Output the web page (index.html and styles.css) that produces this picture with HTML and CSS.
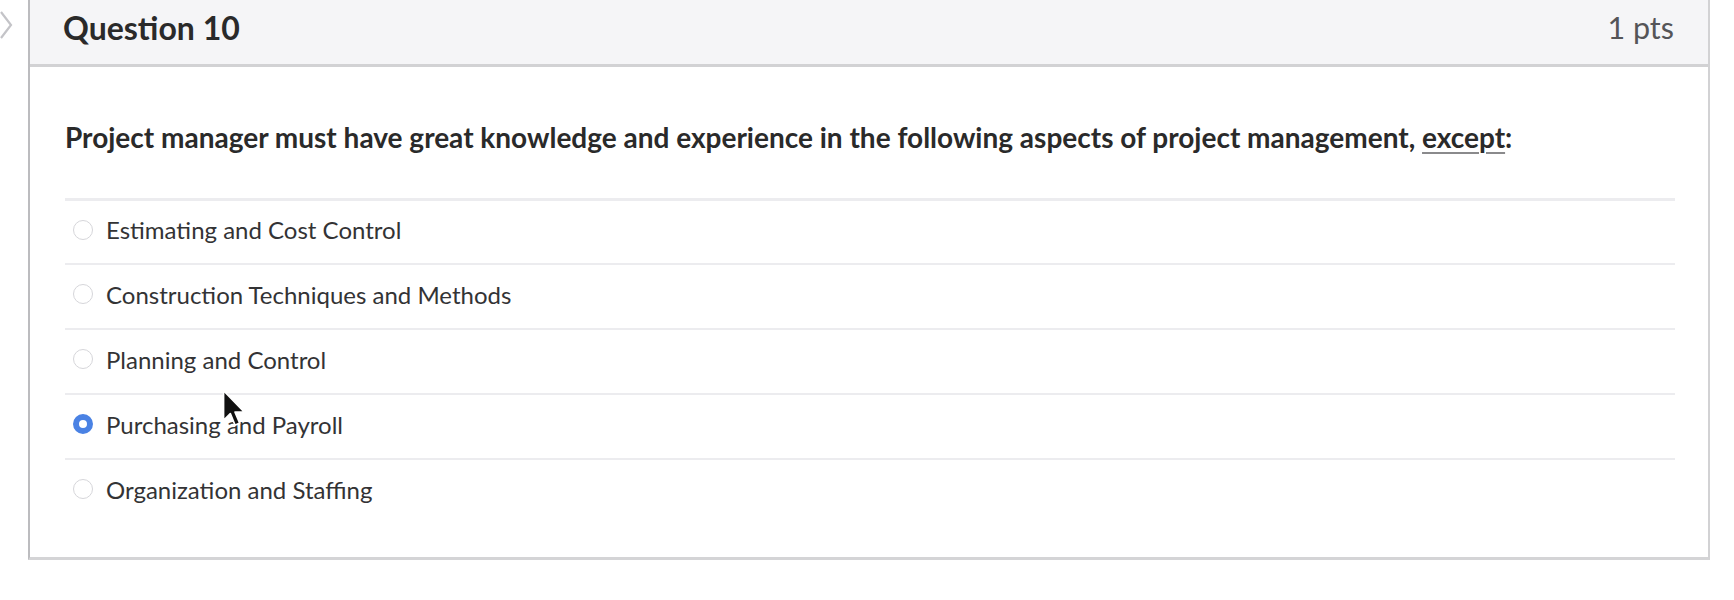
FILE: index.html
```html
<!DOCTYPE html>
<html>
<head>
<meta charset="utf-8">
<link rel="stylesheet" href="styles.css">
</head>
<body>
<div class="page">
  <div class="gutter">
    <svg class="chevron" width="14" height="30" viewBox="0 0 14 30"><polyline points="1,2 11,15 1,28" fill="none" stroke="#c4c4c8" stroke-width="2.2"/></svg>
  </div>
  <div class="card">
    <div class="card-header">
      <span class="q-title">Question 10</span>
      <span class="q-pts">1 pts</span>
    </div>
    <div class="card-body">
      <p class="q-text">Project manager must have great knowledge and experience in the following aspects of project management, <u class="emph">except</u>:</p>
      <div class="answers">
        <label class="answer"><span class="radio"></span><span class="label">Estimating and Cost Control</span></label>
        <label class="answer"><span class="radio"></span><span class="label">Construction Techniques and Methods</span></label>
        <label class="answer"><span class="radio"></span><span class="label">Planning and Control</span></label>
        <label class="answer"><span class="radio checked"></span><span class="label">Purchasing and Payroll</span>
          <svg class="cursor" width="25" height="40" viewBox="0 0 24 38"><path d="M1.5,1.5 L1.5,30 L8,23.5 L12.5,34.5 L17,32.5 L12.5,22 L21.5,22 Z" fill="#111" stroke="#fff" stroke-width="1.6" stroke-linejoin="round"/></svg>
        </label>
        <label class="answer"><span class="radio"></span><span class="label">Organization and Staffing</span></label>
      </div>
    </div>
  </div>
</div>
</body>
</html>
```

FILE: styles.css
```css
html, body {
  margin: 0;
  padding: 0;
  background: #ffffff;
}
body {
  font-family: Lato, "Noto Sans", sans-serif;
  color: #2d2d2d;
}
.page {
  display: flex;
  align-items: flex-start;
  width: 1734px;
}
.gutter {
  width: 28px;
  flex: none;
  padding-top: 10px;
}
.chevron {
  display: block;
}
.card {
  width: 1678px;
  border-left: 2px solid #bcbcbf;
  border-right: 2px solid #d2d2d4;
  border-bottom: 3px solid #d4d4d6;
}
.card-header {
  box-sizing: border-box;
  height: 67px;
  background: #f5f5f7;
  border-bottom: 3px solid #d2d2d4;
  display: flex;
  justify-content: space-between;
  align-items: center;
  padding: 0 34px 10px 33px;
}
.q-title {
  font-size: 32px;
  font-weight: 700;
  color: #2a2a2a;
}
.q-pts {
  font-size: 30.5px;
  font-weight: 400;
  color: #555558;
}
.card-body {
  padding: 51px 33px 37px 35px;
}
.q-text {
  margin: 0 0 42px 0;
  font-size: 28px;
  font-weight: 700;
  line-height: 38px;
  color: #2a2a2a;
}
.emph {
  text-decoration-color: #8a8a8c;
  text-decoration-thickness: 2px;
  text-underline-offset: 4px;
}
.answers {
  display: flex;
  flex-direction: column;
}
.answer {
  position: relative;
  box-sizing: border-box;
  display: flex;
  align-items: center;
  gap: 13px;
  height: 65px;
  padding: 0 0 5px 8px;
  border-top: 2px solid #ececef;
}
.answer:first-child {
  border-top-width: 3px;
}
.answer:last-child {
  height: 62px;
  padding-bottom: 2px;
}
.radio {
  width: 20px;
  height: 20px;
  border-radius: 50%;
  border: 1px solid #d6d6da;
  box-sizing: border-box;
  background: #fff;
  flex: none;
}
.radio.checked {
  border: 6px solid #4a82e4;
  background: #fff;
}
.label {
  font-size: 24px;
  font-weight: 400;
  color: #333335;
}
.cursor {
  position: absolute;
  left: 157px;
  top: -6px;
}
```
